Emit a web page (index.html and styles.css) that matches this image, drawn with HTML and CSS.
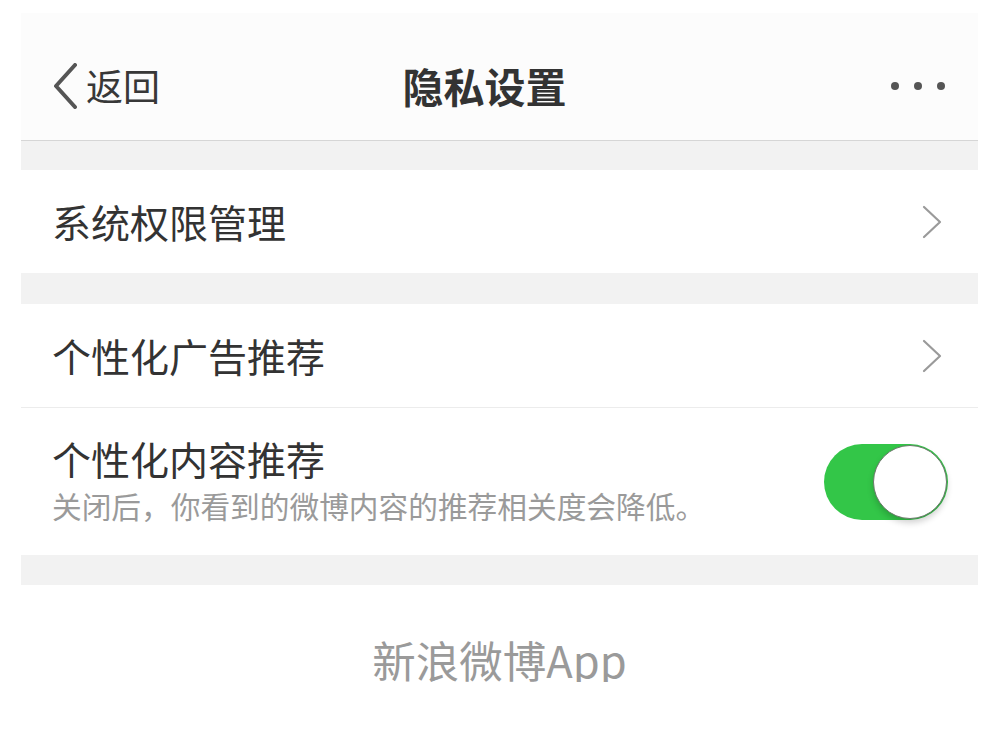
FILE: index.html
```html
<!DOCTYPE html>
<html lang="zh-CN">
<head>
<meta charset="utf-8">
<title>隐私设置</title>
<link rel="stylesheet" href="styles.css">
</head>
<body>
<div class="page">
  <header class="nav">
    <div class="nav-left">
      <svg class="back-icon" width="26" height="46" viewBox="0 0 26 46"><path d="M23 2 L4 23 L23 44" fill="none" stroke="#555" stroke-width="4" stroke-linecap="round" stroke-linejoin="round"/></svg>
      <span class="back-text">返回</span>
    </div>
    <h1 class="nav-title">隐私设置</h1>
    <div class="nav-right">
      <span class="dot"></span><span class="dot"></span><span class="dot"></span>
    </div>
  </header>
  <div class="gap g1"></div>
  <div class="row r1">
    <span class="row-title">系统权限管理</span>
    <svg class="chev" width="20" height="34" viewBox="0 0 20 34"><path d="M2 2 L18 17 L2 32" fill="none" stroke="#9a9a9a" stroke-width="2.2" stroke-linecap="round" stroke-linejoin="round"/></svg>
  </div>
  <div class="gap g2"></div>
  <div class="row r2 divided">
    <span class="row-title">个性化广告推荐</span>
    <svg class="chev" width="20" height="34" viewBox="0 0 20 34"><path d="M2 2 L18 17 L2 32" fill="none" stroke="#9a9a9a" stroke-width="2.2" stroke-linecap="round" stroke-linejoin="round"/></svg>
  </div>
  <div class="row r3">
    <div class="row-text">
      <span class="row-title">个性化内容推荐</span>
      <span class="row-sub">关闭后，你看到的微博内容的推荐相关度会降低。</span>
    </div>
    <div class="toggle"><span class="knob"></span></div>
  </div>
  <div class="gap g3"></div>
  <footer class="foot">新浪微博App</footer>
</div>
</body>
</html>
```

FILE: styles.css
```css
html, body {
  margin: 0;
  padding: 0;
  background: #ffffff;
}
body {
  font-family: "Noto Sans CJK SC", "Noto Sans", sans-serif;
  color: #333333;
}
.page {
  margin: 13px 22px 0 21px;
}
.nav {
  box-sizing: border-box;
  height: 128px;
  background: #fcfcfc;
  border-bottom: 1px solid #d6d6d6;
  display: grid;
  grid-template-columns: 1fr auto 1fr;
  align-items: center;
  padding: 18px 33px 0 31px;
}
.nav-left {
  display: flex;
  align-items: center;
  gap: 8px;
}
.back-text {
  font-size: 37px;
  line-height: 1;
  color: #383838;
}
.nav-title {
  margin: 0 28px 0 0;
  font-size: 41px;
  font-weight: 700;
  line-height: 1;
  color: #333333;
}
.nav-right {
  display: flex;
  justify-content: flex-end;
  gap: 15px;
}
.dot {
  width: 8px;
  height: 8px;
  border-radius: 50%;
  background: #555555;
}
.gap {
  background: #f2f2f2;
}
.g1 { height: 29px; }
.g2 { height: 31px; }
.g3 { height: 30px; }
.row {
  display: flex;
  align-items: center;
  justify-content: space-between;
  padding: 0 36px 0 31px;
  background: #ffffff;
}
.r1, .r2 { height: 103px; }
.divided {
  border-bottom: 1px solid #ececec;
}
.r3 {
  height: 147px;
  padding-right: 30px;
}
.row-title {
  font-size: 39px;
  line-height: 1;
  color: #333333;
}
.row-text {
  display: flex;
  flex-direction: column;
  gap: 13px;
  padding-bottom: 4px;
}
.row-sub {
  font-size: 29.7px;
  line-height: 1;
  color: #9a9a9a;
}
.chev {
  display: block;
}
.toggle {
  width: 124px;
  height: 76px;
  border-radius: 38px;
  background: #33c648;
  display: flex;
  justify-content: flex-end;
  align-items: center;
  padding: 0 1px;
  box-sizing: border-box;
}
.knob {
  width: 72px;
  height: 72px;
  border-radius: 50%;
  background: #ffffff;
  border: 1px solid #6a7a6a;
  box-shadow: 0 4px 6px rgba(0, 0, 0, 0.18);
}
.foot {
  text-align: center;
  font-size: 43.5px;
  line-height: 1;
  color: #9a9a9a;
  padding-top: 53px;
}
```
